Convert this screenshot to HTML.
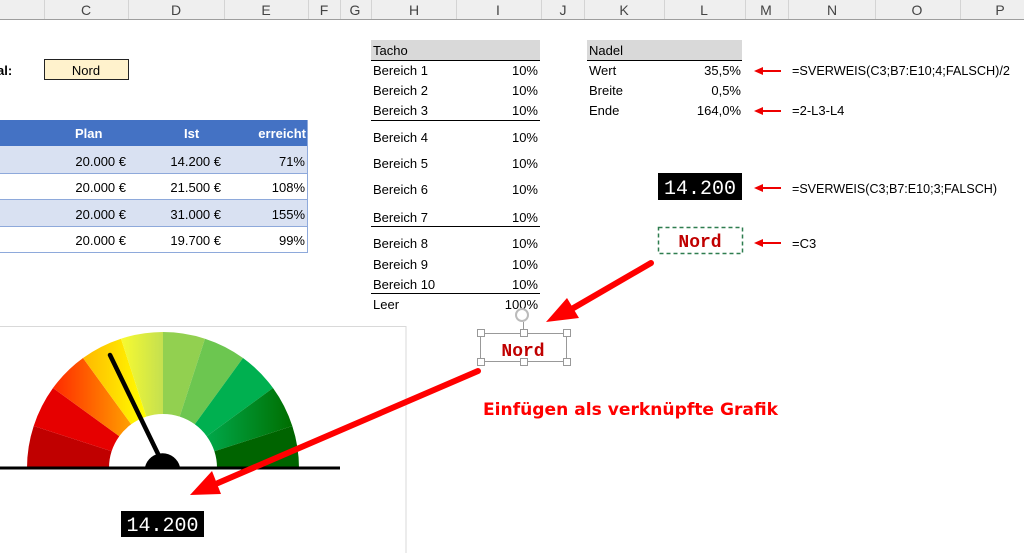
<!DOCTYPE html>
<html><head><meta charset="utf-8"><style>
html,body{margin:0;padding:0;background:#fff;width:1024px;height:553px;overflow:hidden}
svg{display:block}
text{font-family:"Liberation Sans",sans-serif;font-size:13px;fill:#000}
.h{font-size:14px;fill:#444;text-anchor:middle}
.r{text-anchor:end}
.m{font-family:"Liberation Mono",monospace}
</style></head><body>
<svg width="1024" height="553" viewBox="0 0 1024 553" xmlns="http://www.w3.org/2000/svg">
<defs>
<linearGradient id="g2" x1="0" x2="1"><stop offset="0" stop-color="#ff2a00"/><stop offset="1" stop-color="#ffa000"/></linearGradient>
<linearGradient id="g3" x1="0" x2="1"><stop offset="0" stop-color="#ffb800"/><stop offset="1" stop-color="#ffff00"/></linearGradient>
<linearGradient id="g4" x1="0" x2="1"><stop offset="0" stop-color="#f8fa30"/><stop offset="1" stop-color="#c4e050"/></linearGradient>
<linearGradient id="g8" x1="0" x2="1"><stop offset="0" stop-color="#00a84a"/><stop offset="1" stop-color="#006e00"/></linearGradient>
</defs>
<rect x="0" y="0" width="1024" height="19" fill="#efefef"/>
<line x1="0" y1="19.5" x2="1024" y2="19.5" stroke="#9e9e9e"/>
<g stroke="#d4d4d4">
<line x1="44.5" y1="0" x2="44.5" y2="19"/><line x1="128.5" y1="0" x2="128.5" y2="19"/><line x1="224.5" y1="0" x2="224.5" y2="19"/><line x1="308.5" y1="0" x2="308.5" y2="19"/><line x1="340.5" y1="0" x2="340.5" y2="19"/><line x1="371.5" y1="0" x2="371.5" y2="19"/><line x1="456.5" y1="0" x2="456.5" y2="19"/><line x1="541.5" y1="0" x2="541.5" y2="19"/><line x1="584.5" y1="0" x2="584.5" y2="19"/><line x1="664.5" y1="0" x2="664.5" y2="19"/><line x1="745.5" y1="0" x2="745.5" y2="19"/><line x1="788.5" y1="0" x2="788.5" y2="19"/><line x1="875.5" y1="0" x2="875.5" y2="19"/><line x1="960.5" y1="0" x2="960.5" y2="19"/>
</g>
<text class="h" x="86" y="15">C</text><text class="h" x="176" y="15">D</text><text class="h" x="266" y="15">E</text><text class="h" x="324" y="15">F</text><text class="h" x="355" y="15">G</text><text class="h" x="414" y="15">H</text><text class="h" x="498" y="15">I</text><text class="h" x="563" y="15">J</text><text class="h" x="624" y="15">K</text><text class="h" x="704" y="15">L</text><text class="h" x="766" y="15">M</text><text class="h" x="832" y="15">N</text><text class="h" x="917" y="15">O</text><text class="h" x="1000" y="15">P</text>

<text x="-3" y="75" font-weight="bold">al:</text>
<rect x="44.5" y="59.5" width="84" height="20" fill="#fff2cc" stroke="#222"/>
<text x="86" y="75" text-anchor="middle">Nord</text>

<rect x="0" y="120" width="308" height="26" fill="#4472c4"/>
<text x="75" y="138" font-weight="bold" style="fill:#fff">Plan</text>
<text x="184" y="138" font-weight="bold" style="fill:#fff">Ist</text>
<text x="306" y="138" class="r" font-weight="bold" style="fill:#fff">erreicht</text>
<rect x="0" y="146" width="308" height="27" fill="#d9e1f2"/>
<rect x="0" y="199" width="308" height="27" fill="#d9e1f2"/>
<g stroke="#8ea9db"><line x1="0" y1="173.5" x2="308" y2="173.5"/><line x1="0" y1="199.5" x2="308" y2="199.5"/><line x1="0" y1="226.5" x2="308" y2="226.5"/><line x1="0" y1="252.5" x2="308" y2="252.5"/><line x1="307.5" y1="120" x2="307.5" y2="253"/></g>
<g>
<text class="r" x="126" y="166">20.000 €</text><text class="r" x="221" y="166">14.200 €</text><text class="r" x="305" y="166">71%</text>
<text class="r" x="126" y="192">20.000 €</text><text class="r" x="221" y="192">21.500 €</text><text class="r" x="305" y="192">108%</text>
<text class="r" x="126" y="219">20.000 €</text><text class="r" x="221" y="219">31.000 €</text><text class="r" x="305" y="219">155%</text>
<text class="r" x="126" y="245">20.000 €</text><text class="r" x="221" y="245">19.700 €</text><text class="r" x="305" y="245">99%</text>
</g>

<rect x="371" y="40" width="169" height="20" fill="#d9d9d9"/>
<line x1="371" y1="60.5" x2="540" y2="60.5" stroke="#000"/>
<text x="373" y="55">Tacho</text>
<text x="373" y="75">Bereich 1</text><text class="r" x="538" y="75">10%</text>
<text x="373" y="95">Bereich 2</text><text class="r" x="538" y="95">10%</text>
<text x="373" y="115">Bereich 3</text><text class="r" x="538" y="115">10%</text>
<line x1="371" y1="120.5" x2="540" y2="120.5" stroke="#000"/>
<text x="373" y="142">Bereich 4</text><text class="r" x="538" y="142">10%</text>
<text x="373" y="168">Bereich 5</text><text class="r" x="538" y="168">10%</text>
<text x="373" y="194">Bereich 6</text><text class="r" x="538" y="194">10%</text>
<text x="373" y="222">Bereich 7</text><text class="r" x="538" y="222">10%</text>
<line x1="371" y1="226.5" x2="540" y2="226.5" stroke="#000"/>
<text x="373" y="248">Bereich 8</text><text class="r" x="538" y="248">10%</text>
<text x="373" y="269">Bereich 9</text><text class="r" x="538" y="269">10%</text>
<text x="373" y="289">Bereich 10</text><text class="r" x="538" y="289">10%</text>
<line x1="371" y1="293.5" x2="540" y2="293.5" stroke="#000"/>
<text x="373" y="309">Leer</text><text class="r" x="538" y="309">100%</text>

<rect x="587" y="40" width="155" height="20" fill="#d9d9d9"/>
<line x1="587" y1="60.5" x2="742" y2="60.5" stroke="#000"/>
<text x="589" y="55">Nadel</text>
<text x="589" y="75">Wert</text><text class="r" x="741" y="75">35,5%</text>
<text x="589" y="95">Breite</text><text class="r" x="741" y="95">0,5%</text>
<text x="589" y="115">Ende</text><text class="r" x="741" y="115">164,0%</text>
<g stroke="#e00" stroke-width="2">
<line x1="760" y1="71" x2="781" y2="71"/><line x1="760" y1="111" x2="781" y2="111"/><line x1="760" y1="188" x2="781" y2="188"/><line x1="760" y1="243" x2="781" y2="243"/>
</g>
<g fill="#e00"><path d="M754 71 L763 67 L763 75Z"/><path d="M754 111 L763 107 L763 115Z"/><path d="M754 188 L763 184 L763 192Z"/><path d="M754 243 L763 239 L763 247Z"/></g>
<text x="792" y="75" textLength="218" lengthAdjust="spacingAndGlyphs">=SVERWEIS(C3;B7:E10;4;FALSCH)/2</text>
<text x="792" y="115">=2-L3-L4</text>
<text x="792" y="193" textLength="205" lengthAdjust="spacingAndGlyphs">=SVERWEIS(C3;B7:E10;3;FALSCH)</text>
<text x="792" y="248">=C3</text>

<rect x="658" y="173" width="84" height="27" fill="#000"/>
<text class="m" x="700" y="194" text-anchor="middle" style="fill:#fff;font-size:20px">14.200</text>
<rect x="658.5" y="227.5" width="84" height="26" fill="#fff" stroke="#2e7d4f" stroke-width="1.5" stroke-dasharray="4,3"/>
<text class="m" x="700" y="247" text-anchor="middle" font-weight="bold" style="fill:#c00000;font-size:18px">Nord</text>

<rect x="-1" y="326.5" width="407" height="240" fill="#fff" stroke="#d9d9d9"/>
<path d="M27,468 A136,136 0 0 1 33.7,426 L111.6,451.3 A54,54 0 0 0 109,468Z" fill="#c00000"/>
<path d="M33.7,426 A136,136 0 0 1 53,388 L119.3,436.2 A54,54 0 0 0 111.6,451.3Z" fill="#e60000"/>
<path d="M53,388 A136,136 0 0 1 83,358 L131.2,424.3 A54,54 0 0 0 119.3,436.2Z" fill="url(#g2)"/>
<path d="M83,358 A136,136 0 0 1 121,338.7 L146.3,416.6 A54,54 0 0 0 131.2,424.3Z" fill="url(#g3)"/>
<path d="M121,338.7 A136,136 0 0 1 163,332 L163,414 A54,54 0 0 0 146.3,416.6Z" fill="url(#g4)"/>
<path d="M163,332 A136,136 0 0 1 205,338.7 L179.7,416.6 A54,54 0 0 0 163,414Z" fill="#92d050"/>
<path d="M205,338.7 A136,136 0 0 1 243,358 L194.8,424.3 A54,54 0 0 0 179.7,416.6Z" fill="#6cc650"/>
<path d="M243,358 A136,136 0 0 1 273,388 L206.7,436.2 A54,54 0 0 0 194.8,424.3Z" fill="#00b050"/>
<path d="M273,388 A136,136 0 0 1 292.3,426 L214.4,451.3 A54,54 0 0 0 206.7,436.2Z" fill="url(#g8)"/>
<path d="M292.3,426 A136,136 0 0 1 299,468 L217,468 A54,54 0 0 0 214.4,451.3Z" fill="#006400"/>
<line x1="0" y1="468" x2="340" y2="468" stroke="#000" stroke-width="3"/>
<line x1="160" y1="458" x2="110" y2="355" stroke="#000" stroke-width="4.5" stroke-linecap="round"/>
<path d="M145,467 A18,18 0 0 1 180,467Z" fill="#000"/>
<rect x="121" y="511" width="83" height="26" fill="#000"/>
<text class="m" x="162.5" y="531" text-anchor="middle" style="fill:#fff;font-size:20px">14.200</text>

<rect x="480.5" y="333.5" width="86" height="28" fill="#fff" stroke="#999"/>
<text class="m" x="523" y="356" text-anchor="middle" font-weight="bold" style="fill:#c00000;font-size:18px">Nord</text>
<line x1="523.5" y1="322" x2="523.5" y2="333" stroke="#999"/>
<circle cx="522" cy="315" r="6" fill="none" stroke="#bbb" stroke-width="2"/>
<g fill="#fff" stroke="#999">
<rect x="477.5" y="329.5" width="7" height="7"/><rect x="520.5" y="329.5" width="7" height="7"/><rect x="563.5" y="329.5" width="7" height="7"/>
<rect x="477.5" y="358.5" width="7" height="7"/><rect x="520.5" y="358.5" width="7" height="7"/><rect x="563.5" y="358.5" width="7" height="7"/>
</g>

<line x1="651" y1="263" x2="570" y2="310" stroke="#f00" stroke-width="6" stroke-linecap="round"/>
<path d="M546,322 L567,298 L579,318Z" fill="#f00"/>
<line x1="478" y1="371" x2="218" y2="483" stroke="#f00" stroke-width="6" stroke-linecap="round"/>
<path d="M190,495 L212,471 L221,494Z" fill="#f00"/>

<text x="483" y="415" font-weight="bold" textLength="295" lengthAdjust="spacingAndGlyphs" style="fill:#f00;font-size:17px;font-family:'DejaVu Sans',sans-serif">Einfügen als verknüpfte Grafik</text>
</svg>
</body></html>
